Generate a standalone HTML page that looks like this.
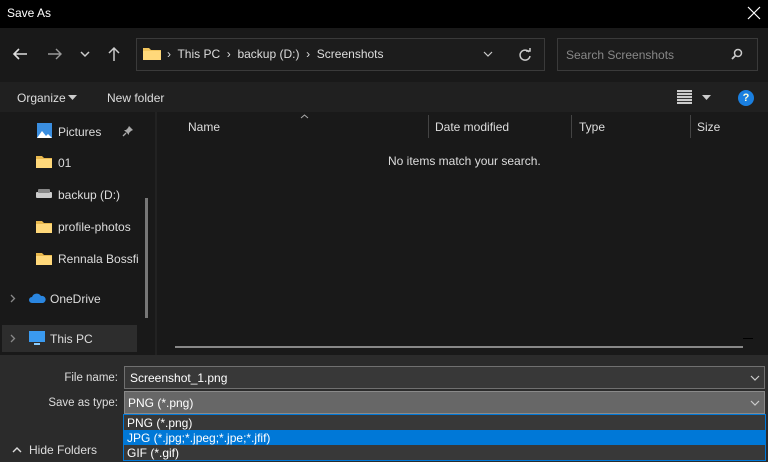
<!DOCTYPE html>
<html><head><style>
*{margin:0;padding:0;box-sizing:border-box}
body{width:768px;height:462px;background:#191919;font-family:"Liberation Sans",sans-serif;font-size:12px;color:#fff;position:relative;overflow:hidden}
.a{position:absolute}
.t{white-space:nowrap}
</style></head><body>
<div class="a" style="left:0;top:0;width:768px;height:28px;background:#000"></div>
<div class="a t" style="left:7px;top:6px;font-size:12px">Save As</div>
<svg class="a" style="left:747px;top:6px" width="14" height="14"><path d="M1 1l12 12M13 1L1 13" stroke="#fff" stroke-width="1.2"/></svg>
<div class="a" style="left:0;top:28px;width:768px;height:54px;background:#191919"></div>
<svg class="a" style="left:12px;top:48px" width="16" height="12"><path d="M15 6H2M7 1L2 6l5 5" stroke="#ddd" stroke-width="1.6" fill="none"/></svg>
<svg class="a" style="left:47px;top:48px" width="16" height="12"><path d="M1 6h13M9 1l5 5-5 5" stroke="#999" stroke-width="1.4" fill="none"/></svg>
<svg class="a" style="left:79px;top:50px" width="12" height="8"><path d="M2 2l4 4 4-4" stroke="#ccc" stroke-width="1.5" fill="none"/></svg>
<svg class="a" style="left:107px;top:46px" width="14" height="16"><path d="M7 15V2M2 7l5-5 5 5" stroke="#ccc" stroke-width="1.5" fill="none"/></svg>
<div class="a" style="left:136px;top:38px;width:409px;height:33px;border:1px solid #3a3a3a;background:#1c1c1c"></div>
<svg class="a" style="left:143px;top:46px" width="18" height="14"><path d="M0 2h6l2 2h10v10H0z" fill="#f2c55c"/><path d="M0 5h18v9H0z" fill="#ffd87a"/></svg>
<div class="a t" style="left:167px;top:47px;color:#ddd">›&nbsp; This PC &nbsp;›&nbsp; backup (D:) &nbsp;›&nbsp; Screenshots</div>
<svg class="a" style="left:483px;top:51px" width="10" height="6"><path d="M1 1l4 4 4-4" stroke="#ccc" stroke-width="1.2" fill="none"/></svg>
<svg class="a" style="left:518px;top:48px" width="14" height="14"><path d="M11 4A5 5 0 1 0 12 8" stroke="#ccc" stroke-width="1.5" fill="none"/><path d="M8 3h4V0" stroke="#ccc" stroke-width="1.5" fill="none"/></svg>
<div class="a" style="left:557px;top:38px;width:201px;height:33px;border:1px solid #3a3a3a;background:#1c1c1c"></div>
<div class="a t" style="left:566px;top:48px;color:#888">Search Screenshots</div>
<svg class="a" style="left:731px;top:48px" width="12" height="12"><circle cx="7" cy="5" r="3.5" stroke="#ccc" stroke-width="1.5" fill="none"/><path d="M4.5 7.5L1 11" stroke="#ccc" stroke-width="1.8"/></svg>
<div class="a" style="left:0;top:82px;width:768px;height:30px;background:#202020"></div>
<div class="a t" style="left:17px;top:91px;color:#ddd">Organize</div>
<svg class="a" style="left:68px;top:95px" width="9" height="5"><path d="M0 0h9L4.5 5z" fill="#ccc"/></svg>
<div class="a t" style="left:107px;top:91px;color:#ddd">New folder</div>
<div class="a" style="left:677px;top:90px;width:15px;height:14px;background:repeating-linear-gradient(#ccc 0 2px,#333 2px 3px)"></div>
<svg class="a" style="left:702px;top:95px" width="9" height="5"><path d="M0 0h9L4.5 5z" fill="#ccc"/></svg>
<div class="a" style="left:738px;top:90px;width:16px;height:16px;border-radius:50%;background:#1a7fe0;color:#ffd;font-size:11px;text-align:center;line-height:16px;font-weight:bold">?</div>
<!-- nav pane -->
<div class="a" style="left:155px;top:112px;width:2px;height:243px;background:#222"></div>
<svg class="a" style="left:37px;top:123px" width="15" height="15"><rect width="15" height="15" fill="#3a8ee0"/><path d="M0 15l5-7 4 5 2-2 4 4z" fill="#fff"/></svg>
<div class="a t" style="left:58px;top:125px;color:#ddd">Pictures</div>
<svg class="a" style="left:122px;top:125px" width="12" height="12"><path d="M7 1l4 4-2 1-2 2 0 2-5-5 2 0 2-2z" fill="#aaa"/><path d="M4 8L1 11" stroke="#aaa" stroke-width="1.3"/></svg>
<svg class="a" style="left:36px;top:155px" width="16" height="13"><path d="M0 1h6l2 2h8v10H0z" fill="#e8b84e"/><path d="M0 4h16v9H0z" fill="#ffd87a"/></svg>
<div class="a t" style="left:58px;top:156px;color:#ddd">01</div>
<svg class="a" style="left:36px;top:189px" width="16" height="10"><rect y="3" width="16" height="6" rx="1" fill="#ccc"/><rect x="2" y="0" width="12" height="4" rx="1" fill="#888"/></svg>
<div class="a t" style="left:58px;top:188px;color:#ddd">backup (D:)</div>
<svg class="a" style="left:36px;top:220px" width="16" height="13"><path d="M0 1h6l2 2h8v10H0z" fill="#e8b84e"/><path d="M0 4h16v9H0z" fill="#ffd87a"/></svg>
<div class="a t" style="left:58px;top:220px;color:#ddd">profile-photos</div>
<svg class="a" style="left:36px;top:252px" width="16" height="13"><path d="M0 1h6l2 2h8v10H0z" fill="#e8b84e"/><path d="M0 4h16v9H0z" fill="#ffd87a"/></svg>
<div class="a t" style="left:58px;top:252px;color:#ddd;width:80px;overflow:hidden">Rennala Bossfight</div>
<div class="a" style="left:145px;top:198px;width:3px;height:120px;background:#777"></div>
<svg class="a" style="left:10px;top:294px" width="6" height="9"><path d="M1 1l3.5 3.5L1 8" stroke="#888" stroke-width="1.3" fill="none"/></svg>
<svg class="a" style="left:29px;top:292px" width="17" height="11"><path d="M3 11a3 3 0 0 1 0-6 5 5 0 0 1 9-1 3.5 3.5 0 0 1 2 7z" fill="#2a86e0"/></svg>
<div class="a t" style="left:50px;top:292px;color:#ddd">OneDrive</div>
<div class="a" style="left:2px;top:325px;width:135px;height:27px;background:#2d2d2d"></div>
<svg class="a" style="left:10px;top:334px" width="6" height="9"><path d="M1 1l3.5 3.5L1 8" stroke="#888" stroke-width="1.3" fill="none"/></svg>
<svg class="a" style="left:29px;top:331px" width="16" height="15"><rect width="16" height="11" fill="#3a9af0"/><rect x="5" y="12" width="6" height="2" fill="#8cf"/></svg>
<div class="a t" style="left:50px;top:332px;color:#ddd">This PC</div>
<!-- content -->
<svg class="a" style="left:300px;top:114px" width="9" height="5"><path d="M1 4l3.5-3 3.5 3" stroke="#aaa" stroke-width="1" fill="none"/></svg>
<div class="a t" style="left:188px;top:120px;color:#ddd">Name</div>
<div class="a" style="left:428px;top:115px;width:1px;height:23px;background:#444"></div>
<div class="a t" style="left:435px;top:120px;color:#ddd">Date modified</div>
<div class="a" style="left:571px;top:115px;width:1px;height:23px;background:#444"></div>
<div class="a t" style="left:579px;top:120px;color:#ddd">Type</div>
<div class="a" style="left:690px;top:115px;width:1px;height:23px;background:#444"></div>
<div class="a t" style="left:697px;top:120px;color:#ddd">Size</div>
<div class="a t" style="left:388px;top:154px;color:#ddd">No items match your search.</div>
<div class="a" style="left:175px;top:346px;width:568px;height:2px;background:#888"></div>
<div class="a" style="left:743px;top:338px;width:10px;height:1px;background:#000"></div>
<!-- bottom -->
<div class="a" style="left:0;top:355px;width:768px;height:107px;background:#2b2b2b"></div>
<div class="a t" style="right:650px;top:372px;color:#ddd;font-size:11.5px">File name:</div>
<div class="a" style="left:124px;top:366px;width:641px;height:23px;border:1px solid #707070;background:#383838"></div>
<div class="a t" style="left:130px;top:371px;color:#fff">Screenshot_1.png</div>
<svg class="a" style="left:750px;top:375px" width="10" height="6"><path d="M1 1l4 4 4-4" stroke="#ccc" stroke-width="1.2" fill="none"/></svg>
<div class="a t" style="right:650px;top:397px;color:#ddd;font-size:11.5px">Save as type:</div>
<div class="a" style="left:124px;top:391px;width:641px;height:23px;border:1px solid #8a8a8a;background:#676767"></div>
<div class="a t" style="left:128px;top:396px;color:#fff">PNG (*.png)</div>
<svg class="a" style="left:750px;top:400px" width="10" height="6"><path d="M1 1l4 4 4-4" stroke="#ccc" stroke-width="1.2" fill="none"/></svg>
<div class="a" style="left:123px;top:414px;width:643px;height:47px;border:1px solid #0078d7;background:#383838"></div>
<div class="a" style="left:124px;top:430px;width:641px;height:15px;background:#0078d7"></div>
<div class="a t" style="left:127px;top:416px;color:#fff">PNG (*.png)</div>
<div class="a t" style="left:127px;top:431px;color:#fff">JPG (*.jpg;*.jpeg;*.jpe;*.jfif)</div>
<div class="a t" style="left:127px;top:446px;color:#fff">GIF (*.gif)</div>
<svg class="a" style="left:12px;top:447px" width="10" height="6"><path d="M1 5l4-4 4 4" stroke="#ddd" stroke-width="1.4" fill="none"/></svg>
<div class="a t" style="left:29px;top:443px;color:#ddd">Hide Folders</div>
</body></html>
